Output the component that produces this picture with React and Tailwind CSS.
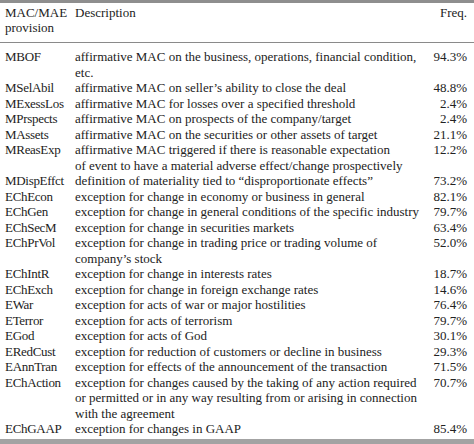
import React from "react";

const rows = [
  ["MBOF", ["affirmative MAC on the business, operations, financial condition,", "etc."], "94.3%"],
  ["MSelAbil", ["affirmative MAC on seller’s ability to close the deal"], "48.8%"],
  ["MExessLos", ["affirmative MAC for losses over a specified threshold"], "2.4%"],
  ["MPrspects", ["affirmative MAC on prospects of the company/target"], "2.4%"],
  ["MAssets", ["affirmative MAC on the securities or other assets of target"], "21.1%"],
  ["MReasExp", ["affirmative MAC triggered if there is reasonable expectation", "of event to have a material adverse effect/change prospectively"], "12.2%"],
  ["MDispEffct", ["definition of materiality tied to “disproportionate effects”"], "73.2%"],
  ["EChEcon", ["exception for change in economy or business in general"], "82.1%"],
  ["EChGen", ["exception for change in general conditions of the specific industry"], "79.7%"],
  ["EChSecM", ["exception for change in securities markets"], "63.4%"],
  ["EChPrVol", ["exception for change in trading price or trading volume of", "company’s stock"], "52.0%"],
  ["EChIntR", ["exception for change in interests rates"], "18.7%"],
  ["EChExch", ["exception for change in foreign exchange rates"], "14.6%"],
  ["EWar", ["exception for acts of war or major hostilities"], "76.4%"],
  ["ETerror", ["exception for acts of terrorism"], "79.7%"],
  ["EGod", ["exception for acts of God"], "30.1%"],
  ["ERedCust", ["exception for reduction of customers or decline in business"], "29.3%"],
  ["EAnnTran", ["exception for effects of the announcement of the transaction"], "71.5%"],
  ["EChAction", ["exception for changes caused by the taking of any action required", "or permitted or in any way resulting from or arising in connection", "with the agreement"], "70.7%"],
  ["EChGAAP", ["exception for changes in GAAP"], "85.4%"],
];

const App = () => {
  return (
    <div className="w-[474px] h-[444px] bg-white overflow-hidden font-['Liberation_Serif',serif] text-[13px] leading-[15.5px] text-[#222]">
      <div className="border-t-[3px] border-[#8e8e8e]">
        {/* header */}
        <div className="flex pl-[5px] pr-[7px] pt-[3px] pb-[7px] border-b border-[#8a8a8a] leading-[14.5px]">
          <div className="w-[70px] shrink-0">
            MAC/MAE
            <br />
            provision
          </div>
          <div className="flex-1">Description</div>
          <div className="text-right">Freq.</div>
        </div>

        {/* body */}
        <div className="pt-[6px] pb-[2px] pl-[5px] pr-[7px] border-b-[5px] border-[#a3a3a3]">
          {rows.map(([code, desc, freq]) => (
            <div key={code} className="flex">
              <div className="w-[70px] shrink-0 whitespace-nowrap tracking-[-0.3px]">{code}</div>
              <div className="flex-1 whitespace-nowrap">
                {desc.map((line, i) => (
                  <div key={i}>{line}</div>
                ))}
              </div>
              <div className="w-[40px] text-right">{freq}</div>
            </div>
          ))}
        </div>
      </div>
    </div>
  );
};

export default App;
